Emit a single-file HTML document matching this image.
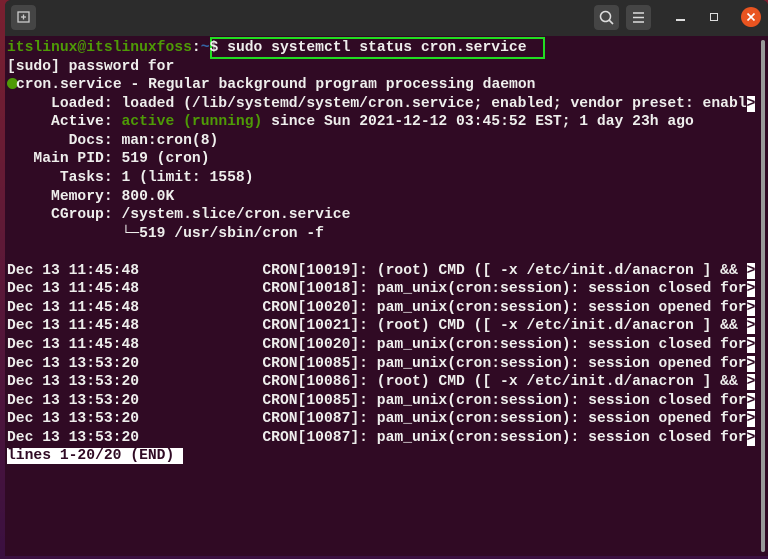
<!DOCTYPE html>
<html><head><meta charset="utf-8"><style>
html,body{margin:0;padding:0;width:768px;height:559px;overflow:hidden;background:#5a1a3a}
.bg{position:absolute;left:0;top:0;width:768px;height:559px;background:linear-gradient(180deg,#7a2030,#3a1040)}
.win{position:absolute;left:5px;top:0;width:763px;height:556px;background:#300a24;border-radius:6px 6px 0 0;overflow:hidden}
.tb{position:absolute;left:0;top:0;width:763px;height:36px;background:#2c2c2c}
.btn{position:absolute;top:5px;width:25px;height:25px;border-radius:4px;background:#454545}
.term{position:absolute;left:2px;top:39px;font-family:"Liberation Mono",monospace;font-size:14.68px;line-height:18.57px;color:#eeeeec;white-space:pre;font-weight:bold}
.g{color:#4e9a06}.b{color:#3465a4}
.dot{display:inline-block;width:11px;height:11px;border-radius:50%;background:#4e9a06;vertical-align:-1px;margin-right:-2px}
.gbox{position:absolute;left:205px;top:37px;width:331px;height:18px;border:2px solid #22dd22}
.inv{background:#fff;color:#300a24}
.sb{position:absolute;left:756px;top:40px;width:4px;height:512px;background:#9a9a9a;border-radius:2px}
</style></head><body><div class="bg"></div>
<div class="win">
<div class="tb">
<div class="btn" style="left:6px"><svg width="25" height="25"><rect x="7" y="7" width="11" height="10" fill="none" stroke="#ccc" stroke-width="1.3"/><path d="M12.5 9.5v5M10 12h5" stroke="#ccc" stroke-width="1.3"/></svg></div>
<div class="btn" style="left:589px"><svg width="25" height="25"><circle cx="11.5" cy="11.5" r="5" fill="none" stroke="#ddd" stroke-width="1.5"/><path d="M15 15l4 4" stroke="#ddd" stroke-width="1.6"/></svg></div>
<div class="btn" style="left:621px"><svg width="25" height="25"><path d="M7 8h11M7 12.5h11M7 17h11" stroke="#ddd" stroke-width="1.4"/></svg></div>
<div style="position:absolute;left:671px;top:19px;width:9px;height:1.5px;background:#ddd"></div>
<div style="position:absolute;left:705px;top:13px;width:6px;height:6px;border:1.5px solid #ddd"></div>
<div style="position:absolute;left:736px;top:7px;width:20px;height:20px;border-radius:50%;background:#e95420"><svg width="20" height="20"><path d="M6.5 6.5l7 7M13.5 6.5l-7 7" stroke="#fff" stroke-width="1.6"/></svg></div>
</div>
<div class="gbox"></div>
<div class="term"><span class="g">itslinux@itslinuxfoss</span>:<span class="b">~</span>$ sudo systemctl status cron.service
[sudo] password for
<span class="dot"></span>cron.service - Regular background program processing daemon
     Loaded: loaded (/lib/systemd/system/cron.service; enabled; vendor preset: enabl<span class="inv">&gt;</span>
     Active: <span class="g">active (running)</span> since Sun 2021-12-12 03:45:52 EST; 1 day 23h ago
       Docs: man:cron(8)
   Main PID: 519 (cron)
      Tasks: 1 (limit: 1558)
     Memory: 800.0K
     CGroup: /system.slice/cron.service
             └─519 /usr/sbin/cron -f

Dec 13 11:45:48              CRON[10019]: (root) CMD ([ -x /etc/init.d/anacron ] &amp;&amp; <span class="inv">&gt;</span>
Dec 13 11:45:48              CRON[10018]: pam_unix(cron:session): session closed for<span class="inv">&gt;</span>
Dec 13 11:45:48              CRON[10020]: pam_unix(cron:session): session opened for<span class="inv">&gt;</span>
Dec 13 11:45:48              CRON[10021]: (root) CMD ([ -x /etc/init.d/anacron ] &amp;&amp; <span class="inv">&gt;</span>
Dec 13 11:45:48              CRON[10020]: pam_unix(cron:session): session closed for<span class="inv">&gt;</span>
Dec 13 13:53:20              CRON[10085]: pam_unix(cron:session): session opened for<span class="inv">&gt;</span>
Dec 13 13:53:20              CRON[10086]: (root) CMD ([ -x /etc/init.d/anacron ] &amp;&amp; <span class="inv">&gt;</span>
Dec 13 13:53:20              CRON[10085]: pam_unix(cron:session): session closed for<span class="inv">&gt;</span>
Dec 13 13:53:20              CRON[10087]: pam_unix(cron:session): session opened for<span class="inv">&gt;</span>
Dec 13 13:53:20              CRON[10087]: pam_unix(cron:session): session closed for<span class="inv">&gt;</span>
<span class="inv">lines 1-20/20 (END) </span></div>
<div class="sb"></div>
</div>
</body></html>
